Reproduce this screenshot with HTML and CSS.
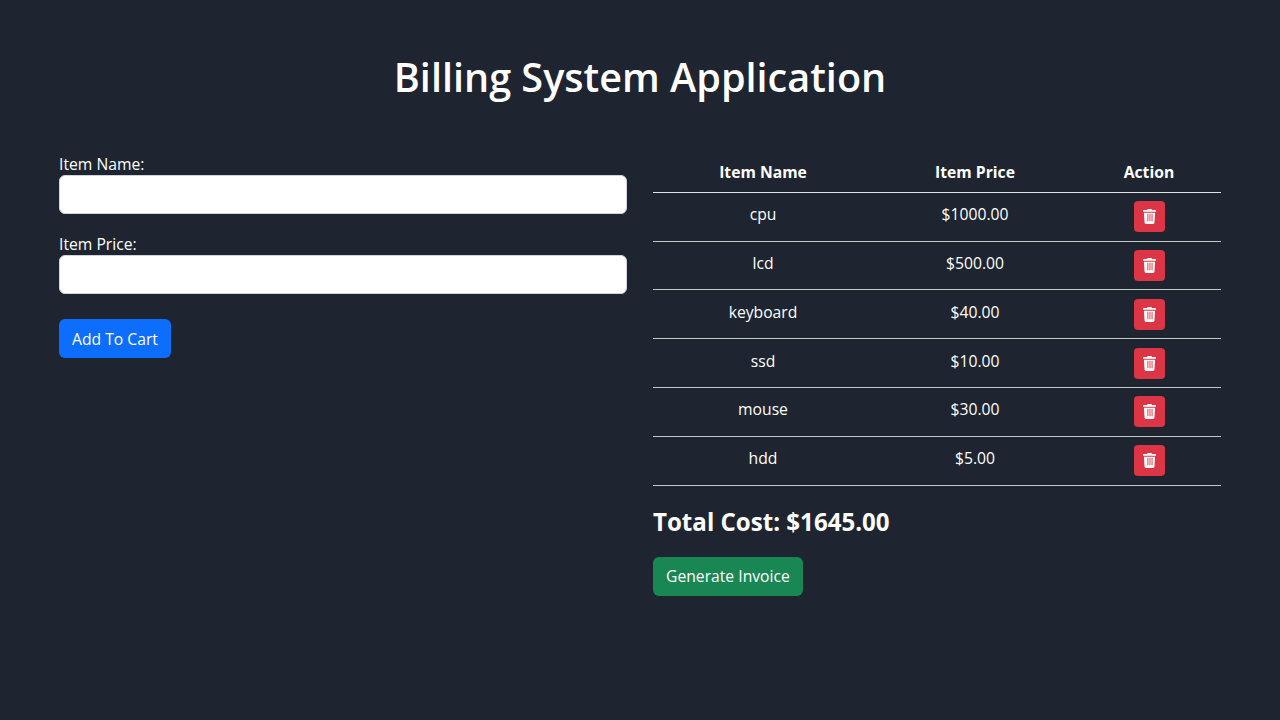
FILE: index.html
```html
<!DOCTYPE html>
<html lang="en">
<head>
  <meta charset="UTF-8">
  <title>Billing System Application</title>
  <link rel="stylesheet" href="styles.css">
</head>
<body>

<h1>Billing System Application</h1>

<div class="columns">
  <!-- Left side: add item form -->
  <form class="item-form">
    <div class="field">
      <label for="item-name">Item Name:</label>
      <input type="text" id="item-name">
    </div>
    <div class="field">
      <label for="item-price">Item Price:</label>
      <input type="text" id="item-price">
    </div>
    <button type="button" class="btn btn-blue">Add To Cart</button>
  </form>

  <!-- Right side: cart -->
  <div class="cart">
    <table>
      <thead>
        <tr><th class="col-name">Item Name</th><th class="col-price">Item Price</th><th>Action</th></tr>
      </thead>
      <tbody>
        <tr><td>cpu</td><td>$1000.00</td><td><button type="button" class="btn-delete"><svg class="trash" viewBox="0 0 448 512"><path d="M432 32H312l-9.400-18.700A24 24 0 0 0 281.100 0H166.800a23.700 23.700 0 0 0-21.400 13.300L136 32H16A16 16 0 0 0 0 48v32a16 16 0 0 0 16 16h416a16 16 0 0 0 16-16V48a16 16 0 0 0-16-16zM53.200 467a48 48 0 0 0 47.900 45h245.800a48 48 0 0 0 47.900-45L416 128H32zM152 172a16 16 0 0 1 32 0v240a16 16 0 0 1-32 0zm72 0a16 16 0 0 1 32 0v240a16 16 0 0 1-32 0zm72 0a16 16 0 0 1 32 0v240a16 16 0 0 1-32 0z"/></svg></button></td></tr>
        <tr><td>lcd</td><td>$500.00</td><td><button type="button" class="btn-delete"><svg class="trash" viewBox="0 0 448 512"><path d="M432 32H312l-9.400-18.700A24 24 0 0 0 281.100 0H166.800a23.700 23.700 0 0 0-21.400 13.300L136 32H16A16 16 0 0 0 0 48v32a16 16 0 0 0 16 16h416a16 16 0 0 0 16-16V48a16 16 0 0 0-16-16zM53.200 467a48 48 0 0 0 47.900 45h245.800a48 48 0 0 0 47.900-45L416 128H32zM152 172a16 16 0 0 1 32 0v240a16 16 0 0 1-32 0zm72 0a16 16 0 0 1 32 0v240a16 16 0 0 1-32 0zm72 0a16 16 0 0 1 32 0v240a16 16 0 0 1-32 0z"/></svg></button></td></tr>
        <tr><td>keyboard</td><td>$40.00</td><td><button type="button" class="btn-delete"><svg class="trash" viewBox="0 0 448 512"><path d="M432 32H312l-9.400-18.700A24 24 0 0 0 281.100 0H166.800a23.700 23.700 0 0 0-21.400 13.300L136 32H16A16 16 0 0 0 0 48v32a16 16 0 0 0 16 16h416a16 16 0 0 0 16-16V48a16 16 0 0 0-16-16zM53.200 467a48 48 0 0 0 47.900 45h245.800a48 48 0 0 0 47.900-45L416 128H32zM152 172a16 16 0 0 1 32 0v240a16 16 0 0 1-32 0zm72 0a16 16 0 0 1 32 0v240a16 16 0 0 1-32 0zm72 0a16 16 0 0 1 32 0v240a16 16 0 0 1-32 0z"/></svg></button></td></tr>
        <tr><td>ssd</td><td>$10.00</td><td><button type="button" class="btn-delete"><svg class="trash" viewBox="0 0 448 512"><path d="M432 32H312l-9.400-18.700A24 24 0 0 0 281.100 0H166.800a23.700 23.700 0 0 0-21.400 13.300L136 32H16A16 16 0 0 0 0 48v32a16 16 0 0 0 16 16h416a16 16 0 0 0 16-16V48a16 16 0 0 0-16-16zM53.200 467a48 48 0 0 0 47.900 45h245.800a48 48 0 0 0 47.900-45L416 128H32zM152 172a16 16 0 0 1 32 0v240a16 16 0 0 1-32 0zm72 0a16 16 0 0 1 32 0v240a16 16 0 0 1-32 0zm72 0a16 16 0 0 1 32 0v240a16 16 0 0 1-32 0z"/></svg></button></td></tr>
        <tr><td>mouse</td><td>$30.00</td><td><button type="button" class="btn-delete"><svg class="trash" viewBox="0 0 448 512"><path d="M432 32H312l-9.400-18.700A24 24 0 0 0 281.100 0H166.800a23.700 23.700 0 0 0-21.400 13.300L136 32H16A16 16 0 0 0 0 48v32a16 16 0 0 0 16 16h416a16 16 0 0 0 16-16V48a16 16 0 0 0-16-16zM53.200 467a48 48 0 0 0 47.900 45h245.800a48 48 0 0 0 47.900-45L416 128H32zM152 172a16 16 0 0 1 32 0v240a16 16 0 0 1-32 0zm72 0a16 16 0 0 1 32 0v240a16 16 0 0 1-32 0zm72 0a16 16 0 0 1 32 0v240a16 16 0 0 1-32 0z"/></svg></button></td></tr>
        <tr><td>hdd</td><td>$5.00</td><td><button type="button" class="btn-delete"><svg class="trash" viewBox="0 0 448 512"><path d="M432 32H312l-9.400-18.700A24 24 0 0 0 281.100 0H166.800a23.700 23.700 0 0 0-21.400 13.300L136 32H16A16 16 0 0 0 0 48v32a16 16 0 0 0 16 16h416a16 16 0 0 0 16-16V48a16 16 0 0 0-16-16zM53.200 467a48 48 0 0 0 47.900 45h245.800a48 48 0 0 0 47.900-45L416 128H32zM152 172a16 16 0 0 1 32 0v240a16 16 0 0 1-32 0zm72 0a16 16 0 0 1 32 0v240a16 16 0 0 1-32 0zm72 0a16 16 0 0 1 32 0v240a16 16 0 0 1-32 0z"/></svg></button></td></tr>
      </tbody>
    </table>
    <h2 class="total">Total Cost: $1645.00</h2>
    <button type="button" class="btn btn-green">Generate Invoice</button>
  </div>
</div>

</body>
</html>
```

FILE: styles.css
```css
* {
  box-sizing: border-box;
}
body {
  background-color: #1e2530;
  color: white;
  font-family: 'Open Sans', 'Noto Sans', sans-serif;
  font-size: 15.7px;
  line-height: 24px;
  margin: 0;
  padding: 48px 59px 0;
}
h1 {
  text-align: center;
  font-size: 39.6px;
  font-weight: 600;
  line-height: 58px;
  margin: 0 0 46px;
}
.columns {
  display: grid;
  grid-template-columns: 1fr 1fr;
  gap: 26px;
}
.field {
  margin-bottom: 20px;
}
.field label {
  display: block;
  height: 21px;
  line-height: 21px;
}
.field input {
  display: block;
  width: 100%;
  height: 39px;
  background-color: white;
  border: 1px solid #ced4da;
  border-radius: 6px;
}
.item-form {
  padding-top: 2px;
}
.item-form .btn {
  margin-top: 25px;
}
.btn {
  display: block;
  height: 39px;
  padding: 0 13px;
  border: none;
  border-radius: 6px;
  color: white;
  font-family: inherit;
  font-size: 15.7px;
}
.btn-blue {
  background-color: #0d6efd;
}
.btn-green {
  background-color: #198754;
}
table {
  width: 100%;
  table-layout: fixed;
  border-collapse: collapse;
  text-align: center;
}
th {
  height: 40.4px;
  font-weight: 700;
  border-bottom: 1px solid #dee2e6;
  padding: 0;
}
.col-name {
  width: 220px;
}
.col-price {
  width: 204px;
}
td {
  height: 48.8px;
  border-bottom: 1px solid #c4c8cd;
  padding: 0 0 5px;
}
.btn-delete {
  display: flex;
  align-items: center;
  justify-content: center;
  width: 31px;
  height: 31px;
  margin: 5px auto 0;
  padding: 0;
  background-color: #dc3545;
  border: none;
  border-radius: 4px;
}
.trash {
  width: 13px;
  height: 15px;
  fill: white;
}
.total {
  font-size: 24.1px;
  font-weight: 700;
  line-height: 30px;
  margin: 21px 0 20px;
}
```
